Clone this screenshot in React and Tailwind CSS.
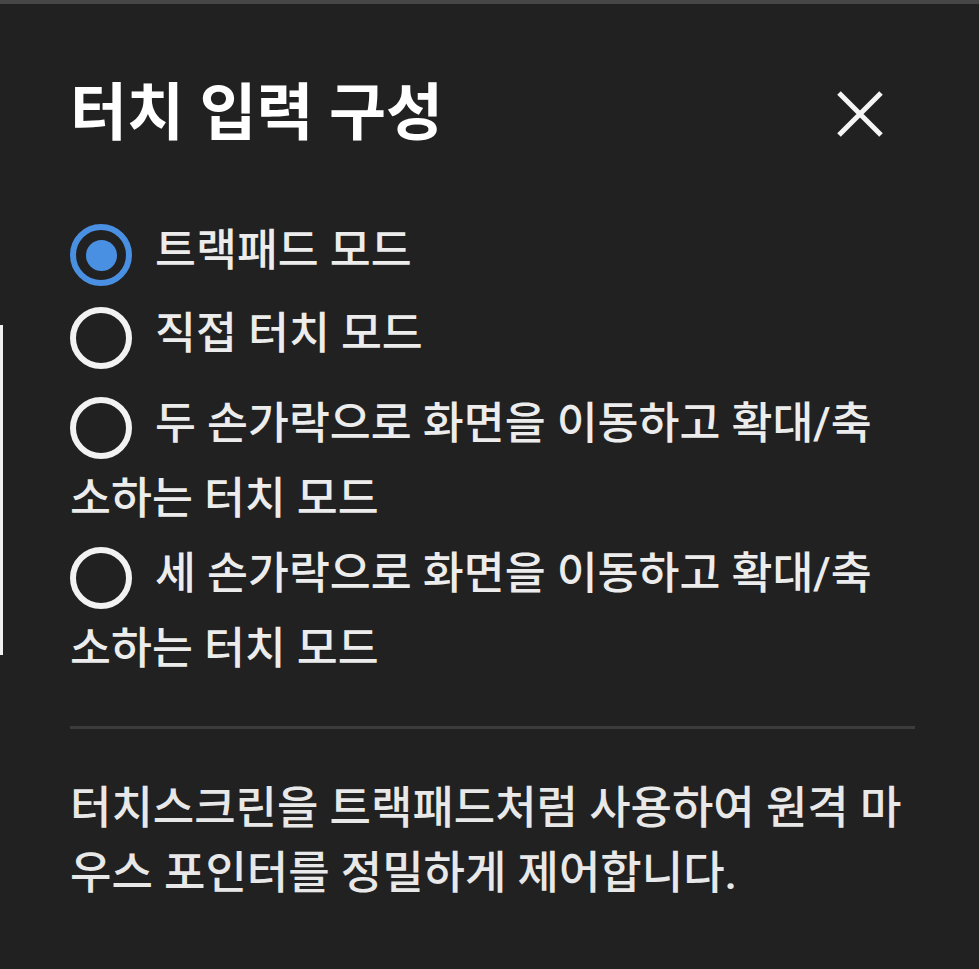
import React, { useState } from 'react';

const OPTIONS = [
    { id: 'trackpad', label: '트랙패드 모드', pad: 'pb-[8px]' },
    { id: 'direct', label: '직접 터치 모드', pad: 'pb-[15px]' },
    { id: 'two', label: '두 손가락으로 화면을 이동하고 확대/축소하는 터치 모드', pad: '' },
    { id: 'three', label: '세 손가락으로 화면을 이동하고 확대/축소하는 터치 모드', pad: '' },
];

const Radio = ({ checked }) => (
    <span
        className={`inline-flex items-center justify-center w-[62px] h-[62px] rounded-full border-[6px] align-middle mr-[23px] relative top-[1px] ${
            checked ? 'border-[#4a90e2]' : 'border-[#f2f2f2]'
        }`}
    >
        {checked && <span className="w-[31px] h-[31px] rounded-full bg-[#4a90e2]" />}
    </span>
);

const CloseIcon = () => (
    <svg width="48" height="48" viewBox="0 0 48 48" fill="none" stroke="#f5f5f5" strokeWidth="5">
        <path d="M3 3L45 45M45 3L3 45" />
    </svg>
);

export default function App() {
    const [mode, setMode] = useState('trackpad');

    return (
        <div
            className="w-[979px] h-[969px] bg-[#212121] border-t-4 border-[#464646] flex overflow-hidden"
            style={{ fontFamily: 'Roboto, "Noto Sans CJK KR", sans-serif' }}
        >
            {/* edge of the view behind the dialog */}
            <div className="w-[3px] shrink-0">
                <div className="mt-[321px] h-[330px] bg-[#f0f0f0]" />
            </div>

            <div className="ml-[67px] w-[845px] pt-[70px]">
                {/* Header */}
                <div className="h-[80px] flex items-center justify-between">
                    <h2 className="text-[62px] font-bold text-white leading-none">터치 입력 구성</h2>
                    <button className="mr-[31px]">
                        <CloseIcon />
                    </button>
                </div>

                {/* Options */}
                <div className="mt-[60px] max-w-[840px]">
                    {OPTIONS.map((o) => (
                        <div
                            key={o.id}
                            onClick={() => setMode(o.id)}
                            className={`text-[44.5px] font-medium leading-[75px] text-[#ececec] cursor-pointer ${o.pad}`}
                        >
                            <Radio checked={mode === o.id} />
                            {o.label}
                        </div>
                    ))}
                </div>

                <div className="mt-[39px] h-[3px] bg-[#3c3c3c]" />

                <p className="mt-[47px] max-w-[840px] text-[45px] font-medium leading-[65px] text-[#e8e8e8]">
                    터치스크린을 트랙패드처럼 사용하여 원격 마우스 포인터를 정밀하게 제어합니다.
                </p>
            </div>
        </div>
    );
}
